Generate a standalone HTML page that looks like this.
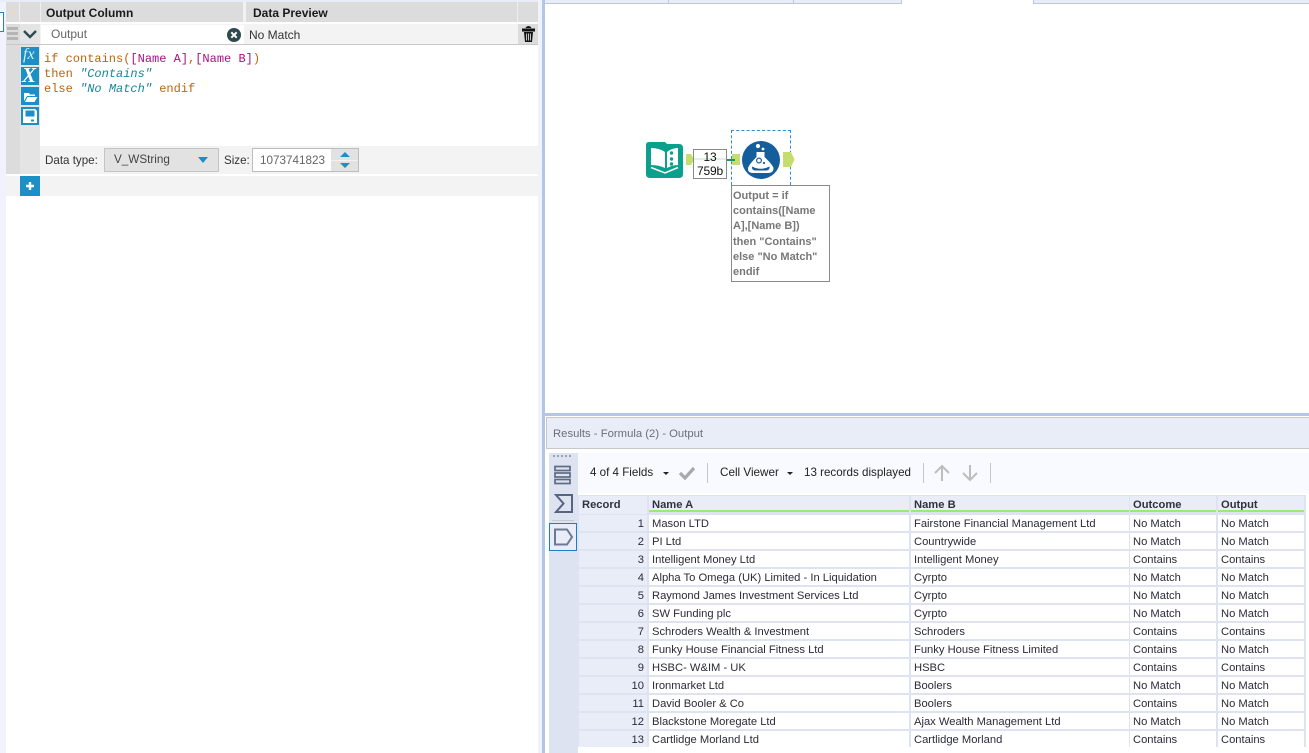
<!DOCTYPE html>
<html><head><meta charset="utf-8">
<style>
html,body{margin:0;padding:0;background:#fff}
#p{position:relative;width:1309px;height:753px;overflow:hidden;background:#fff;font-family:"Liberation Sans",sans-serif;font-size:12px;color:#222}
#p div{position:absolute;box-sizing:border-box}
.t{white-space:nowrap;line-height:16px}
.c{white-space:nowrap;line-height:18px;height:16px;overflow:hidden;padding-left:3px;background:#fff;color:#2b2b3a;font-size:11.2px}
.h{background:#e9edf8;font-weight:bold;white-space:nowrap;line-height:18px;padding-left:3px;color:#2d3440;font-size:11.2px}
.g{position:absolute;left:0;top:0}
.b{position:absolute;background:#1c8fc6}
</style></head><body><div id="p">

<!-- LEFT PANEL -->
<div style="left:0;top:0;width:6px;height:753px;background:#f0f3fb"></div>
<div style="left:0;top:12px;width:4px;height:20px;border:1px solid #2a7fc9;border-left:none;background:#fff"></div>
<div style="left:0;top:0;width:540px;height:2px;background:#e9edf8"></div>
<div style="left:538px;top:0;width:6px;height:753px;background:#f0f3fb"></div>

<div style="left:6px;top:2px;width:532px;height:20px;background:#dcdcdc"></div>
<div style="left:19px;top:2px;width:1px;height:20px;background:#eee"></div>
<div style="left:40px;top:2px;width:1px;height:20px;background:#eee"></div>
<div style="left:243px;top:2px;width:3px;height:20px;background:#f2f2f2"></div>
<div style="left:517px;top:2px;width:1px;height:20px;background:#eee"></div>
<div class="t" style="left:46px;top:5px;font-weight:bold;font-size:12px;color:#1a1a1a">Output Column</div>
<div class="t" style="left:253px;top:5px;font-weight:bold;font-size:12px;color:#1a1a1a">Data Preview</div>

<div style="left:6px;top:24px;width:532px;height:21px;background:#f3f3f3;border-bottom:1px solid #c8c8c8"></div>
<div style="left:6px;top:24px;width:14px;height:20px;background:#dcdcdc"></div>
<div style="left:7px;top:27px;width:11px;height:3px;background:#b5b5b5"></div>
<div style="left:7px;top:32px;width:11px;height:3px;background:#b5b5b5"></div>
<div style="left:7px;top:37px;width:11px;height:3px;background:#b5b5b5"></div>
<div style="left:20px;top:24px;width:20px;height:20px;background:#e4e4e4"></div>
<svg class="g" style="left:23px;top:29px" width="14" height="10"><path d="M1 2 L7 8 L13 2" fill="none" stroke="#2f4a52" stroke-width="2.4"/></svg>
<div style="left:41px;top:25px;width:203px;height:19px;background:#fff"></div>
<div class="t" style="left:51px;top:26px;color:#666;font-size:12px">Output</div>
<svg class="g" style="left:226px;top:27px" width="16" height="16"><circle cx="8" cy="8" r="7" fill="#2f4a4f"/><path d="M5.3 5.3 L10.7 10.7 M10.7 5.3 L5.3 10.7" stroke="#fff" stroke-width="2"/></svg>
<div class="t" style="left:249px;top:27px;color:#333;font-size:12px">No Match</div>
<div style="left:518px;top:24px;width:20px;height:20px;background:#dcdcdc"></div>
<svg class="g" style="left:521px;top:25px" width="15" height="18"><path d="M5 3 Q7.5 0 10 3 M1.5 4 H13.5 V6 H1.5 Z" fill="#111" stroke="#111" stroke-width="1"/><path d="M3 7 H12 L11 17 H4 Z" fill="#111"/><path d="M5.6 8.5 V15.5 M7.5 8.5 V15.5 M9.4 8.5 V15.5" stroke="#ddd" stroke-width="0.9"/></svg>

<div style="left:6px;top:45px;width:14px;height:129px;background:#dcdcdc"></div>
<div style="left:20px;top:45px;width:20px;height:129px;background:#e4e4e4"></div>
<div style="left:40px;top:146px;width:498px;height:28px;background:#f3f3f3"></div>

<div class="b" style="left:21px;top:47px;width:18px;height:18px"></div>
<div class="t" style="left:23px;top:46px;font:italic 16px/18px 'Liberation Serif',serif;color:#d8eef8"><span>fx</span></div>
<div class="b" style="left:21px;top:67px;width:18px;height:18px"></div>
<div class="t" style="left:22px;top:65px;font:italic bold 21px/21px 'Liberation Serif',serif;color:#fff">X</div>
<div class="b" style="left:21px;top:87px;width:18px;height:18px"></div>
<svg class="g" style="left:21px;top:87px" width="18" height="18"><path d="M3 6 H8 L9 7.5 H14 V9 H6 L3 14 Z" fill="#fff"/><path d="M6.5 10 H16.5 L13.5 15 H4 Z" fill="#fff"/></svg>
<div class="b" style="left:21px;top:107px;width:18px;height:18px"></div>
<svg class="g" style="left:21px;top:107px" width="18" height="18"><path d="M2 2 H14 L16 4 V16 H2 Z" fill="#fff"/><rect x="4.5" y="3.5" width="9" height="6" fill="#1c8fc6"/><rect x="10" y="12.5" width="3" height="2" fill="#1c8fc6"/></svg>

<div class="t" style="left:44px;top:52px;font:12px/15px 'Liberation Mono',monospace;white-space:pre;color:#b8650f"><span>if contains(</span><span style="color:#a8107f">[Name A]</span><span>,</span><span style="color:#a8107f">[Name B]</span><span>)</span></div>
<div class="t" style="left:44px;top:67px;font:12px/15px 'Liberation Mono',monospace;white-space:pre;color:#b8650f">then <i style="color:#17879b">"Contains"</i></div>
<div class="t" style="left:44px;top:82px;font:12px/15px 'Liberation Mono',monospace;white-space:pre;color:#b8650f">else <i style="color:#17879b">"No Match"</i> endif</div>

<div class="t" style="left:45px;top:153px;color:#333;font-size:11.6px">Data type:</div>
<div style="left:104px;top:148px;width:115px;height:24px;background:#e2e2e2;border:1px solid #c4c4c4"></div>
<div class="t" style="left:114px;top:152px;color:#444;font-size:11.7px">V_WString</div>
<svg class="g" style="left:197px;top:156px" width="12" height="8"><path d="M1 1 H11 L6 7 Z" fill="#1c8fc6"/></svg>
<div class="t" style="left:224px;top:153px;color:#333;font-size:11.6px">Size:</div>
<div style="left:252px;top:148px;width:107px;height:24px;background:#fff;border:1px solid #bdbdbd"></div>
<div class="t" style="left:260px;top:153px;color:#666;font-size:11.7px">1073741823</div>
<div style="left:331px;top:149px;width:27px;height:22px;background:#e2e2e2"></div>
<div style="left:331px;top:160px;width:27px;height:1px;background:#f2f2f2"></div>
<svg class="g" style="left:339px;top:151px" width="12" height="18"><path d="M1 6 L6 1 L11 6 Z M1 12 H11 L6 17 Z" fill="#1c8fc6"/></svg>

<div style="left:6px;top:176px;width:532px;height:20px;background:#f3f3f3"></div>
<div class="b" style="left:20px;top:176px;width:20px;height:20px"></div>
<svg class="g" style="left:20px;top:176px" width="20" height="20"><path d="M10 6 V14 M6 10 H14" stroke="#fff" stroke-width="2.4"/></svg>

<!-- SPLITTER -->
<div style="left:542px;top:0;width:3px;height:753px;background:#b4c6e4"></div>

<!-- TABS -->
<div style="left:545px;top:0;width:357px;height:4px;background:#e9edf8;border-bottom:1px solid #bcc8e0"></div>
<div style="left:668px;top:0;width:1px;height:4px;background:#bcc8e0"></div>
<div style="left:793px;top:0;width:1px;height:4px;background:#bcc8e0"></div>
<div style="left:901px;top:0;width:1px;height:4px;background:#bcc8e0"></div>
<div style="left:1033px;top:0;width:276px;height:4px;background:#e9edf8;border-bottom:1px solid #bcc8e0;border-left:1px solid #bcc8e0"></div>

<!-- CANVAS -->
<svg class="g" style="left:645px;top:140px" width="40" height="40">
<path d="M4 2 H20 L22 4 H34 Q38 4 38 8 V34 Q38 38 34 38 H5 Q1 38 1 34 V5 Q1 2 4 2 Z" fill="#0aa08c"/>
<path d="M6 8 Q14 8 20 12 V28 Q14 25 6 25 Z" fill="#fff"/>
<path d="M22 12 Q27 8 33 8 V25 Q27 25 22 28 Z" fill="#fff"/>
<circle cx="26.5" cy="13" r="1.7" fill="#0aa08c"/><circle cx="26.5" cy="19" r="1.7" fill="#0aa08c"/><circle cx="26.5" cy="24" r="1.7" fill="#0aa08c"/>
<path d="M6 27.5 L20 33 L33 27.5" stroke="#fff" stroke-width="1.5" fill="none"/>
</svg>
<svg class="g" style="left:686px;top:154px" width="8" height="11"><path d="M0 0 H5 L8 5.5 L5 11 H0 Z" fill="#c5dd6f"/></svg>
<div style="left:693px;top:149px;width:34px;height:30px;background:#fff;border:1px solid #8a8a8a"></div>
<div style="left:694px;top:158px;width:32px;height:2px;background:#dff0e4"></div>
<div class="t" style="left:693px;top:150px;width:34px;text-align:center;font-size:12px;line-height:14px;letter-spacing:-.2px;color:#111">13<br>759b</div>
<svg class="g" style="left:732px;top:154px" width="8" height="11"><path d="M0 0 H8 V11 H0 Z" fill="#c5dd6f"/></svg>
<div style="left:727px;top:159px;width:8px;height:2px;background:#1f9462"></div>
<div style="left:731px;top:130px;width:60px;height:55px;border:1px dashed #2a8fd8;border-bottom:none"></div>
<svg class="g" style="left:741px;top:140px" width="40" height="40">
<circle cx="20" cy="20" r="19" fill="#155e9c"/>
<path d="M15.5 12 H23.5 V17 Q33 26 32.5 29 Q32 33 27 33 H12 Q7 33 7 29 Q6.5 26 15.5 17 Z" fill="#fff"/>
<path d="M11 26.5 Q20 31 28.5 26.5 Q29 30 25.5 30.5 H14 Q10.5 30 11 26.5 Z" fill="#155e9c"/>
<circle cx="18" cy="20.5" r="2.4" fill="none" stroke="#155e9c" stroke-width="1.2"/>
<circle cx="23" cy="23" r="1.1" fill="#155e9c"/>
<circle cx="17" cy="6" r="2.1" fill="#fff"/><circle cx="22" cy="9" r="1.4" fill="#fff"/>
</svg>
<svg class="g" style="left:783px;top:152px" width="12" height="15"><path d="M0 0 H8 L11.5 7.5 L8 15 H0 Z" fill="#c5dd6f"/></svg>
<div style="left:731px;top:185px;width:99px;height:97px;background:#fff;border:1px solid #8a8a8a"></div>
<div class="t" style="left:733px;top:189px;font-weight:bold;font-size:11px;line-height:15.2px;color:#777">Output = if<br>contains([Name<br>A],[Name B])<br>then "Contains"<br>else "No Match"<br>endif</div>

<!-- RESULTS -->
<div style="left:545px;top:413px;width:764px;height:340px;background:#fff"></div>
<div style="left:545px;top:413px;width:764px;height:3px;background:#b4c6e4"></div>
<div style="left:546px;top:417px;width:763px;height:32px;background:#e9edf8;border-top:1px solid #c8c8c8;border-bottom:1px solid #c8c8c8;border-left:1px solid #c8c8c8"></div>
<div class="t" style="left:553px;top:426px;color:#6a6f78;font-size:11.3px">Results - Formula (2) - Output</div>

<div style="left:549px;top:453px;width:29px;height:300px;background:#dde3f0"></div>
<div style="left:553px;top:455px;width:20px;height:2px;background-image:linear-gradient(90deg,#9aa3b3 50%,transparent 50%);background-size:4px 2px"></div>
<svg class="g" style="left:553px;top:465px" width="20" height="20"><g fill="none" stroke="#5d6b85" stroke-width="1.7"><rect x="2" y="1.5" width="15" height="4"/><rect x="2" y="8" width="15" height="4"/><rect x="2" y="14.5" width="15" height="4"/></g></svg>
<svg class="g" style="left:553px;top:492px" width="22" height="22"><path d="M3 3 H19 V20 H3 L10.5 11.5 Z" fill="none" stroke="#56647f" stroke-width="2"/></svg>
<div style="left:552px;top:520px;width:22px;height:1px;background:#c3cad8"></div>
<div style="left:549px;top:523px;width:28px;height:28px;background:#e9edf8;border:1px solid #1c7ec8"></div>
<svg class="g" style="left:553px;top:528px" width="22" height="18"><path d="M2 1.5 H14 L19 9 L14 16.5 H2 Z" fill="none" stroke="#6d7a93" stroke-width="2"/></svg>

<div style="left:578px;top:453px;width:731px;height:40px;background:#f8faff"></div>
<div class="t" style="left:590px;top:465px;font-size:11.6px;color:#222">4 of 4 Fields</div>
<svg class="g" style="left:662px;top:471px" width="8" height="5"><path d="M1 1 H7 L4 4 Z" fill="#222"/></svg>
<svg class="g" style="left:678px;top:465px" width="18" height="16"><path d="M2 8 L7 13 L16 3" fill="none" stroke="#a9a9a9" stroke-width="3.2"/></svg>
<div style="left:707px;top:463px;width:1px;height:20px;background:#c6c6c6"></div>
<div class="t" style="left:720px;top:465px;font-size:11.7px;color:#222">Cell Viewer</div>
<svg class="g" style="left:786px;top:471px" width="8" height="5"><path d="M1 1 H7 L4 4 Z" fill="#222"/></svg>
<div class="t" style="left:804px;top:465px;font-size:11.6px;color:#222">13 records displayed</div>
<div style="left:923px;top:463px;width:1px;height:20px;background:#c6c6c6"></div>
<svg class="g" style="left:933px;top:464px" width="18" height="18"><path d="M9 17 V2 M2 9 L9 2 L16 9" fill="none" stroke="#bdbdbd" stroke-width="2"/></svg>
<svg class="g" style="left:961px;top:464px" width="18" height="18"><path d="M9 1 V16 M2 9 L9 16 L16 9" fill="none" stroke="#bdbdbd" stroke-width="2"/></svg>
<div style="left:990px;top:463px;width:1px;height:20px;background:#c6c6c6"></div>

<!-- TABLE -->
<div style="left:578px;top:495px;width:728px;height:252px;background:#dde3f0"></div>
<div class="h" style="left:579px;top:496px;width:68px;height:18px">Record</div>
<div class="h" style="left:649px;top:496px;width:260px;height:16px">Name A</div>
<div class="h" style="left:911px;top:496px;width:218px;height:16px">Name B</div>
<div class="h" style="left:1130px;top:496px;width:86px;height:16px">Outcome</div>
<div class="h" style="left:1218px;top:496px;width:86px;height:16px">Output</div>
<div style="left:649px;top:510px;width:260px;height:2px;background:#94ec72"></div>
<div style="left:911px;top:510px;width:218px;height:2px;background:#94ec72"></div>
<div style="left:1130px;top:510px;width:86px;height:2px;background:#94ec72"></div>
<div style="left:1218px;top:510px;width:86px;height:2px;background:#94ec72"></div>

<div class="c" style="left:579px;top:515px;width:68px;background:#e9edf8;text-align:right;padding-right:3px">1</div><div class="c" style="left:649px;top:515px;width:260px">Mason LTD</div><div class="c" style="left:911px;top:515px;width:218px">Fairstone Financial Management Ltd</div><div class="c" style="left:1130px;top:515px;width:86px">No Match</div><div class="c" style="left:1218px;top:515px;width:86px">No Match</div>
<div class="c" style="left:579px;top:533px;width:68px;background:#e9edf8;text-align:right;padding-right:3px">2</div><div class="c" style="left:649px;top:533px;width:260px">PI Ltd</div><div class="c" style="left:911px;top:533px;width:218px">Countrywide</div><div class="c" style="left:1130px;top:533px;width:86px">No Match</div><div class="c" style="left:1218px;top:533px;width:86px">No Match</div>
<div class="c" style="left:579px;top:551px;width:68px;background:#e9edf8;text-align:right;padding-right:3px">3</div><div class="c" style="left:649px;top:551px;width:260px">Intelligent Money Ltd</div><div class="c" style="left:911px;top:551px;width:218px">Intelligent Money</div><div class="c" style="left:1130px;top:551px;width:86px">Contains</div><div class="c" style="left:1218px;top:551px;width:86px">Contains</div>
<div class="c" style="left:579px;top:569px;width:68px;background:#e9edf8;text-align:right;padding-right:3px">4</div><div class="c" style="left:649px;top:569px;width:260px">Alpha To Omega (UK) Limited - In Liquidation</div><div class="c" style="left:911px;top:569px;width:218px">Cyrpto</div><div class="c" style="left:1130px;top:569px;width:86px">No Match</div><div class="c" style="left:1218px;top:569px;width:86px">No Match</div>
<div class="c" style="left:579px;top:587px;width:68px;background:#e9edf8;text-align:right;padding-right:3px">5</div><div class="c" style="left:649px;top:587px;width:260px">Raymond James Investment Services Ltd</div><div class="c" style="left:911px;top:587px;width:218px">Cyrpto</div><div class="c" style="left:1130px;top:587px;width:86px">No Match</div><div class="c" style="left:1218px;top:587px;width:86px">No Match</div>
<div class="c" style="left:579px;top:605px;width:68px;background:#e9edf8;text-align:right;padding-right:3px">6</div><div class="c" style="left:649px;top:605px;width:260px">SW Funding plc</div><div class="c" style="left:911px;top:605px;width:218px">Cyrpto</div><div class="c" style="left:1130px;top:605px;width:86px">No Match</div><div class="c" style="left:1218px;top:605px;width:86px">No Match</div>
<div class="c" style="left:579px;top:623px;width:68px;background:#e9edf8;text-align:right;padding-right:3px">7</div><div class="c" style="left:649px;top:623px;width:260px">Schroders Wealth &amp; Investment</div><div class="c" style="left:911px;top:623px;width:218px">Schroders</div><div class="c" style="left:1130px;top:623px;width:86px">Contains</div><div class="c" style="left:1218px;top:623px;width:86px">Contains</div>
<div class="c" style="left:579px;top:641px;width:68px;background:#e9edf8;text-align:right;padding-right:3px">8</div><div class="c" style="left:649px;top:641px;width:260px">Funky House Financial Fitness Ltd</div><div class="c" style="left:911px;top:641px;width:218px">Funky House Fitness Limited</div><div class="c" style="left:1130px;top:641px;width:86px">Contains</div><div class="c" style="left:1218px;top:641px;width:86px">No Match</div>
<div class="c" style="left:579px;top:659px;width:68px;background:#e9edf8;text-align:right;padding-right:3px">9</div><div class="c" style="left:649px;top:659px;width:260px">HSBC- W&amp;IM - UK</div><div class="c" style="left:911px;top:659px;width:218px">HSBC</div><div class="c" style="left:1130px;top:659px;width:86px">Contains</div><div class="c" style="left:1218px;top:659px;width:86px">Contains</div>
<div class="c" style="left:579px;top:677px;width:68px;background:#e9edf8;text-align:right;padding-right:3px">10</div><div class="c" style="left:649px;top:677px;width:260px">Ironmarket Ltd</div><div class="c" style="left:911px;top:677px;width:218px">Boolers</div><div class="c" style="left:1130px;top:677px;width:86px">No Match</div><div class="c" style="left:1218px;top:677px;width:86px">No Match</div>
<div class="c" style="left:579px;top:695px;width:68px;background:#e9edf8;text-align:right;padding-right:3px">11</div><div class="c" style="left:649px;top:695px;width:260px">David Booler &amp; Co</div><div class="c" style="left:911px;top:695px;width:218px">Boolers</div><div class="c" style="left:1130px;top:695px;width:86px">Contains</div><div class="c" style="left:1218px;top:695px;width:86px">No Match</div>
<div class="c" style="left:579px;top:713px;width:68px;background:#e9edf8;text-align:right;padding-right:3px">12</div><div class="c" style="left:649px;top:713px;width:260px">Blackstone Moregate Ltd</div><div class="c" style="left:911px;top:713px;width:218px">Ajax Wealth Management Ltd</div><div class="c" style="left:1130px;top:713px;width:86px">No Match</div><div class="c" style="left:1218px;top:713px;width:86px">No Match</div>
<div class="c" style="left:579px;top:731px;width:68px;background:#e9edf8;text-align:right;padding-right:3px">13</div><div class="c" style="left:649px;top:731px;width:260px">Cartlidge Morland Ltd</div><div class="c" style="left:911px;top:731px;width:218px">Cartlidge Morland</div><div class="c" style="left:1130px;top:731px;width:86px">Contains</div><div class="c" style="left:1218px;top:731px;width:86px">Contains</div>

</div></body></html>
